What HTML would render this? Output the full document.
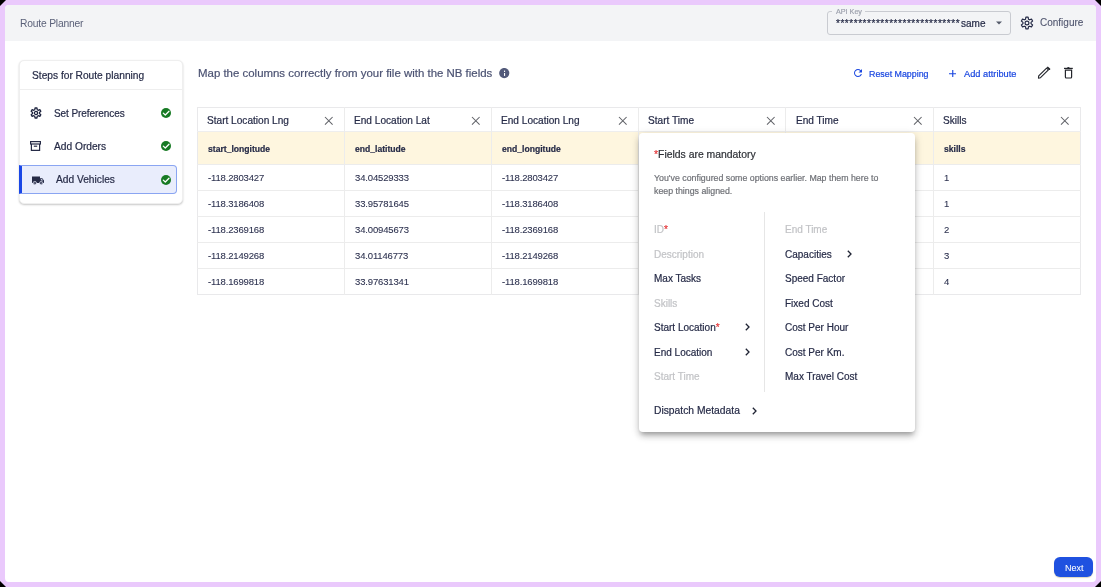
<!DOCTYPE html>
<html><head><meta charset="utf-8"><style>
html,body{margin:0;padding:0;width:1101px;height:587px;overflow:hidden;background:#000}
body{position:relative;font-family:"Liberation Sans", sans-serif}
.t{position:absolute;line-height:1;white-space:nowrap;will-change:transform;-webkit-text-stroke:0.2px currentColor}
</style></head><body>
<div style="position:absolute;left:0;top:0;width:1101px;height:587px;background:#eac9fc;clip-path:polygon(6px 0,calc(100% - 6px) 0,100% 6px,100% calc(100% - 6px),calc(100% - 6px) 100%,6px 100%,0 calc(100% - 6px),0 6px)"></div>
<div style="position:absolute;left:5px;top:5px;width:1091px;height:577px;background:#fff;border-radius:4px;overflow:hidden"></div>
<div style="position:absolute;left:5px;top:5px;width:1091px;height:36px;background:#f3f4f6;border-radius:4px 4px 0 0"></div>
<div class="t" style="left:20.00px;top:18.68px;font-size:10.3px;color:#5b6179;font-weight:400;-webkit-text-stroke:0;letter-spacing:-0.2px">Route Planner</div>
<div style="position:absolute;left:827px;top:11px;width:184px;height:24px;box-sizing:border-box;border:1px solid #c9cbd1;border-radius:3px"></div>
<div style="position:absolute;left:832px;top:8px;width:33px;height:6px;background:#f3f4f6"></div>
<div class="t" style="left:836.00px;top:7.51px;font-size:7.2px;color:#9ea2ae;font-weight:400;">API Key</div>
<div class="t" style="left:836.00px;top:18.84px;font-size:10px;color:#262b47;font-weight:400;letter-spacing:0.54px">****************************</div>
<div class="t" style="left:960.60px;top:18.84px;font-size:10px;color:#262b47;font-weight:400;">same</div>
<svg style="position:absolute;left:996px;top:21px" width="6" height="4" viewBox="0 0 6 4"><path d="M0 0.5h6l-3 3z" fill="#555a6a"/></svg>
<svg style="position:absolute;left:1020.2px;top:15.8px" width="14" height="14" viewBox="0 0 24 24"><path d="M14.51 5.46L13.95 1.99L10.05 1.99L9.49 5.46L7.59 6.56L4.30 5.31L2.36 8.68L5.09 10.90L5.09 13.10L2.36 15.32L4.30 18.69L7.59 17.44L9.49 18.54L10.05 22.01L13.95 22.01L14.51 18.54L16.41 17.44L19.70 18.69L21.64 15.32L18.91 13.10L18.91 10.90L21.64 8.68L19.70 5.31L16.41 6.56Z" fill="none" stroke="#262b47" stroke-width="2.0" stroke-linejoin="round"/><circle cx="12" cy="12" r="3.3" fill="none" stroke="#262b47" stroke-width="2.0"/></svg>
<div class="t" style="left:1039.70px;top:18.23px;font-size:10px;color:#4f556e;font-weight:400;-webkit-text-stroke:0.1px currentColor">Configure</div>
<div style="position:absolute;left:19px;top:60px;width:164px;height:144px;box-sizing:border-box;border:1px solid #efefef;border-radius:5px;box-shadow:0 1px 2px rgba(0,0,0,0.22);background:#fff"></div>
<div class="t" style="left:31.80px;top:70.77px;font-size:10.2px;color:#262b47;font-weight:400;">Steps for Route planning</div>
<div style="position:absolute;left:20px;top:89px;width:162px;height:1px;background:#eeeeee"></div>
<svg style="position:absolute;left:29.700000000000003px;top:106.8px" width="12" height="12" viewBox="0 0 24 24"><path d="M14.51 5.46L13.95 1.99L10.05 1.99L9.49 5.46L7.59 6.56L4.30 5.31L2.36 8.68L5.09 10.90L5.09 13.10L2.36 15.32L4.30 18.69L7.59 17.44L9.49 18.54L10.05 22.01L13.95 22.01L14.51 18.54L16.41 17.44L19.70 18.69L21.64 15.32L18.91 13.10L18.91 10.90L21.64 8.68L19.70 5.31L16.41 6.56Z" fill="none" stroke="#1f2540" stroke-width="2.6" stroke-linejoin="round"/><circle cx="12" cy="12" r="3.2" fill="none" stroke="#1f2540" stroke-width="2.6"/></svg>
<div class="t" style="left:54.10px;top:108.94px;font-size:10px;color:#262b47;font-weight:400;letter-spacing:-0.07px">Set Preferences</div>
<svg style="position:absolute;left:161px;top:107.9px" width="10" height="10" viewBox="0 0 10 10"><circle cx="5" cy="5" r="5" fill="#177a24"/><path d="M2.3 5.1l2 1.9 3.7-3.8" fill="none" stroke="#fff" stroke-width="1.25" stroke-linecap="round" stroke-linejoin="round"/></svg>
<svg style="position:absolute;left:30px;top:141px" width="11" height="10" viewBox="0 0 11 10"><rect x="0.6" y="0.6" width="9.8" height="2.4" fill="none" stroke="#262b47" stroke-width="1.2"/><path d="M1.4 3v6.4h8.2V3" fill="none" stroke="#262b47" stroke-width="1.2"/><path d="M3.8 5.2h3.4" stroke="#262b47" stroke-width="1.2"/></svg>
<div class="t" style="left:54.30px;top:141.97px;font-size:10.2px;color:#262b47;font-weight:400;">Add Orders</div>
<svg style="position:absolute;left:161px;top:141px" width="10" height="10" viewBox="0 0 10 10"><circle cx="5" cy="5" r="5" fill="#177a24"/><path d="M2.3 5.1l2 1.9 3.7-3.8" fill="none" stroke="#fff" stroke-width="1.25" stroke-linecap="round" stroke-linejoin="round"/></svg>
<div style="position:absolute;left:19px;top:165px;width:158px;height:29px;box-sizing:border-box;background:#e9edfc;border:1px solid #8aa5f2;border-left:3px solid #1a47e6;border-radius:0 4px 4px 0"></div>
<svg style="position:absolute;left:32px;top:175.6px" width="12" height="9" viewBox="0 0 12 9"><path d="M0 0.4h8v1.8h2.3l1.7 2.4v2.4h-12z" fill="#262b47"/><path d="M8.8 3h1.2l1.1 1.6h-2.3z" fill="#c8cde0"/><circle cx="2.8" cy="7.1" r="1.7" fill="#262b47" stroke="#e9edfc" stroke-width="0.7"/><circle cx="9.2" cy="7.1" r="1.7" fill="#262b47" stroke="#e9edfc" stroke-width="0.7"/><circle cx="2.8" cy="7.1" r="0.5" fill="#e9edfc"/><circle cx="9.2" cy="7.1" r="0.5" fill="#e9edfc"/></svg>
<div class="t" style="left:56.20px;top:175.07px;font-size:10.2px;color:#262b47;font-weight:400;">Add Vehicles</div>
<svg style="position:absolute;left:161.1px;top:174.6px" width="10" height="10" viewBox="0 0 10 10"><circle cx="5" cy="5" r="5" fill="#177a24"/><path d="M2.3 5.1l2 1.9 3.7-3.8" fill="none" stroke="#fff" stroke-width="1.25" stroke-linecap="round" stroke-linejoin="round"/></svg>
<div class="t" style="left:197.90px;top:67.91px;font-size:11.45px;color:#4b5272;font-weight:400;">Map the columns correctly from your file with the NB fields</div>
<svg style="position:absolute;left:499px;top:68px" width="11" height="11" viewBox="0 0 11 11"><circle cx="5.25" cy="5.05" r="5.1" fill="#525a7a"/><rect x="5" y="2.6" width="1.1" height="1.4" fill="#fff"/><rect x="5" y="5.0" width="1.1" height="2.9" fill="#fff"/></svg>
<svg style="position:absolute;left:851.8px;top:67px" width="12" height="12" viewBox="0 0 24 24"><path fill="#1a47e0" d="M17.65 6.35C16.2 4.9 14.21 4 12 4c-4.42 0-7.99 3.58-7.99 8s3.57 8 7.99 8c3.73 0 6.84-2.55 7.73-6h-2.08c-.82 2.330-3.04 4-5.65 4-3.31 0-6-2.69-6-6s2.69-6 6-6c1.66 0 3.140.69 4.22 1.78L13 11h7V4l-2.35 2.35z"/></svg>
<div class="t" style="left:869.30px;top:69.81px;font-size:8.85px;color:#1a47e0;font-weight:400;">Reset Mapping</div>
<svg style="position:absolute;left:948.6px;top:69.8px" width="7.5" height="7.5" viewBox="0 0 8 8"><path d="M4 0v8M0 4h8" stroke="#1a47e0" stroke-width="1.2"/></svg>
<div class="t" style="left:963.70px;top:69.57px;font-size:9.25px;color:#1a47e0;font-weight:400;">Add attribute</div>
<svg style="position:absolute;left:1034.5px;top:62.4px" width="20" height="20" viewBox="0 0 20 20"><path d="M3.7 13.9L11.6 6.1 13.4 7.9 5.5 15.7 3.5 16.1z" fill="none" stroke="#23252b" stroke-width="1.15" stroke-linejoin="round"/><path d="M12.75 5.5L14.45 7.2" stroke="#23252b" stroke-width="1.7" stroke-linecap="round"/></svg>
<svg style="position:absolute;left:1060px;top:63px" width="16" height="18" viewBox="0 0 16 18"><path d="M4 5.4h8.8" stroke="#23252b" stroke-width="1.2"/><path d="M7.4 4.5h2" stroke="#23252b" stroke-width="0.9"/><path d="M5.4 7.2h6.2v6.9q0 .9-.9.9H6.3q-.9 0-.9-.9z" fill="none" stroke="#23252b" stroke-width="1.2"/></svg>
<div style="position:absolute;left:197px;top:107px;width:884px;height:188px;box-sizing:border-box;border:1px solid #e9e9eb;background:#fff"></div>
<div style="position:absolute;left:198px;top:132px;width:882px;height:32px;background:#fef6df"></div>
<div style="position:absolute;left:197px;top:131px;width:884px;height:1px;background:#eeeeee"></div>
<div style="position:absolute;left:197px;top:164px;width:884px;height:1px;background:#ececec"></div>
<div style="position:absolute;left:197px;top:190px;width:884px;height:1px;background:#ececec"></div>
<div style="position:absolute;left:197px;top:216px;width:884px;height:1px;background:#ececec"></div>
<div style="position:absolute;left:197px;top:242px;width:884px;height:1px;background:#ececec"></div>
<div style="position:absolute;left:197px;top:268px;width:884px;height:1px;background:#ececec"></div>
<div style="position:absolute;left:344px;top:107px;width:1px;height:188px;background:#ececec"></div>
<div style="position:absolute;left:491px;top:107px;width:1px;height:188px;background:#ececec"></div>
<div style="position:absolute;left:638px;top:107px;width:1px;height:188px;background:#ececec"></div>
<div style="position:absolute;left:785px;top:107px;width:1px;height:188px;background:#ececec"></div>
<div style="position:absolute;left:933px;top:107px;width:1px;height:188px;background:#ececec"></div>
<div class="t" style="left:206.80px;top:116.05px;font-size:10.1px;color:#262b47;font-weight:400;">Start Location Lng</div>
<svg style="position:absolute;left:324px;top:116px" width="9" height="9" viewBox="0 0 9 9"><path d="M1 1l7.6 7.6M8.6 1l-7.6 7.6" stroke="#606268" stroke-width="1.05"/></svg>
<div class="t" style="left:208.00px;top:145.12px;font-size:8.6px;color:#262b47;font-weight:700;">start_longitude</div>
<div class="t" style="left:208.30px;top:173.36px;font-size:9.5px;color:#2e3350;font-weight:400;letter-spacing:-0.15px;-webkit-text-stroke:0.1px currentColor">-118.2803427</div>
<div class="t" style="left:208.30px;top:199.36px;font-size:9.5px;color:#2e3350;font-weight:400;letter-spacing:-0.15px;-webkit-text-stroke:0.1px currentColor">-118.3186408</div>
<div class="t" style="left:208.30px;top:225.36px;font-size:9.5px;color:#2e3350;font-weight:400;letter-spacing:-0.15px;-webkit-text-stroke:0.1px currentColor">-118.2369168</div>
<div class="t" style="left:208.30px;top:251.36px;font-size:9.5px;color:#2e3350;font-weight:400;letter-spacing:-0.15px;-webkit-text-stroke:0.1px currentColor">-118.2149268</div>
<div class="t" style="left:208.30px;top:277.36px;font-size:9.5px;color:#2e3350;font-weight:400;letter-spacing:-0.15px;-webkit-text-stroke:0.1px currentColor">-118.1699818</div>
<div class="t" style="left:353.80px;top:116.05px;font-size:10.1px;color:#262b47;font-weight:400;">End Location Lat</div>
<svg style="position:absolute;left:471px;top:116px" width="9" height="9" viewBox="0 0 9 9"><path d="M1 1l7.6 7.6M8.6 1l-7.6 7.6" stroke="#606268" stroke-width="1.05"/></svg>
<div class="t" style="left:355.00px;top:145.12px;font-size:8.6px;color:#262b47;font-weight:700;">end_latitude</div>
<div class="t" style="left:355.30px;top:173.36px;font-size:9.5px;color:#2e3350;font-weight:400;letter-spacing:-0.15px;-webkit-text-stroke:0.1px currentColor">34.04529333</div>
<div class="t" style="left:355.30px;top:199.36px;font-size:9.5px;color:#2e3350;font-weight:400;letter-spacing:-0.15px;-webkit-text-stroke:0.1px currentColor">33.95781645</div>
<div class="t" style="left:355.30px;top:225.36px;font-size:9.5px;color:#2e3350;font-weight:400;letter-spacing:-0.15px;-webkit-text-stroke:0.1px currentColor">34.00945673</div>
<div class="t" style="left:355.30px;top:251.36px;font-size:9.5px;color:#2e3350;font-weight:400;letter-spacing:-0.15px;-webkit-text-stroke:0.1px currentColor">34.01146773</div>
<div class="t" style="left:355.30px;top:277.36px;font-size:9.5px;color:#2e3350;font-weight:400;letter-spacing:-0.15px;-webkit-text-stroke:0.1px currentColor">33.97631341</div>
<div class="t" style="left:500.80px;top:116.05px;font-size:10.1px;color:#262b47;font-weight:400;">End Location Lng</div>
<svg style="position:absolute;left:618px;top:116px" width="9" height="9" viewBox="0 0 9 9"><path d="M1 1l7.6 7.6M8.6 1l-7.6 7.6" stroke="#606268" stroke-width="1.05"/></svg>
<div class="t" style="left:502.00px;top:145.12px;font-size:8.6px;color:#262b47;font-weight:700;">end_longitude</div>
<div class="t" style="left:502.30px;top:173.36px;font-size:9.5px;color:#2e3350;font-weight:400;letter-spacing:-0.15px;-webkit-text-stroke:0.1px currentColor">-118.2803427</div>
<div class="t" style="left:502.30px;top:199.36px;font-size:9.5px;color:#2e3350;font-weight:400;letter-spacing:-0.15px;-webkit-text-stroke:0.1px currentColor">-118.3186408</div>
<div class="t" style="left:502.30px;top:225.36px;font-size:9.5px;color:#2e3350;font-weight:400;letter-spacing:-0.15px;-webkit-text-stroke:0.1px currentColor">-118.2369168</div>
<div class="t" style="left:502.30px;top:251.36px;font-size:9.5px;color:#2e3350;font-weight:400;letter-spacing:-0.15px;-webkit-text-stroke:0.1px currentColor">-118.2149268</div>
<div class="t" style="left:502.30px;top:277.36px;font-size:9.5px;color:#2e3350;font-weight:400;letter-spacing:-0.15px;-webkit-text-stroke:0.1px currentColor">-118.1699818</div>
<div class="t" style="left:648.40px;top:116.05px;font-size:10.1px;color:#262b47;font-weight:400;">Start Time</div>
<svg style="position:absolute;left:765.6px;top:116px" width="9" height="9" viewBox="0 0 9 9"><path d="M1 1l7.6 7.6M8.6 1l-7.6 7.6" stroke="#606268" stroke-width="1.05"/></svg>
<div class="t" style="left:795.60px;top:116.05px;font-size:10.1px;color:#262b47;font-weight:400;">End Time</div>
<svg style="position:absolute;left:912.8px;top:116px" width="9" height="9" viewBox="0 0 9 9"><path d="M1 1l7.6 7.6M8.6 1l-7.6 7.6" stroke="#606268" stroke-width="1.05"/></svg>
<div class="t" style="left:942.80px;top:116.05px;font-size:10.1px;color:#262b47;font-weight:400;">Skills</div>
<svg style="position:absolute;left:1060px;top:116px" width="9" height="9" viewBox="0 0 9 9"><path d="M1 1l7.6 7.6M8.6 1l-7.6 7.6" stroke="#606268" stroke-width="1.05"/></svg>
<div class="t" style="left:944.00px;top:145.12px;font-size:8.6px;color:#262b47;font-weight:700;">skills</div>
<div class="t" style="left:944.30px;top:173.36px;font-size:9.5px;color:#2e3350;font-weight:400;letter-spacing:-0.15px;-webkit-text-stroke:0.1px currentColor">1</div>
<div class="t" style="left:944.30px;top:199.36px;font-size:9.5px;color:#2e3350;font-weight:400;letter-spacing:-0.15px;-webkit-text-stroke:0.1px currentColor">1</div>
<div class="t" style="left:944.30px;top:225.36px;font-size:9.5px;color:#2e3350;font-weight:400;letter-spacing:-0.15px;-webkit-text-stroke:0.1px currentColor">2</div>
<div class="t" style="left:944.30px;top:251.36px;font-size:9.5px;color:#2e3350;font-weight:400;letter-spacing:-0.15px;-webkit-text-stroke:0.1px currentColor">3</div>
<div class="t" style="left:944.30px;top:277.36px;font-size:9.5px;color:#2e3350;font-weight:400;letter-spacing:-0.15px;-webkit-text-stroke:0.1px currentColor">4</div>
<div style="position:absolute;left:639px;top:133px;width:276px;height:299px;background:#fff;border-radius:4px;box-shadow:0 4px 4px -2px rgba(0,0,0,0.22),0 5px 7px 0 rgba(0,0,0,0.14),0 2px 9px 1px rgba(0,0,0,0.12)"></div>
<div class="t" style="left:653.80px;top:149.90px;font-size:10.4px;color:#2d3036;font-weight:400;"><span style="color:#e5383b">*</span>Fields are mandatory</div>
<div class="t" style="left:654.40px;top:174.05px;font-size:8.8px;color:#6e7076;font-weight:400;">You&#39;ve configured some options earlier. Map them here to</div>
<div class="t" style="left:654.40px;top:187.05px;font-size:8.8px;color:#6e7076;font-weight:400;">keep things aligned.</div>
<div style="position:absolute;left:764px;top:212px;width:1px;height:180px;background:#e6e6e6"></div>
<div class="t" style="left:654.20px;top:225.23px;font-size:10px;color:#c2c3c6;font-weight:400;">ID<span style="color:#e5383b">*</span></div>
<div class="t" style="left:654.20px;top:249.73px;font-size:10px;color:#c2c3c6;font-weight:400;">Description</div>
<div class="t" style="left:654.20px;top:274.24px;font-size:10px;color:#262b47;font-weight:400;">Max Tasks</div>
<div class="t" style="left:654.20px;top:298.74px;font-size:10px;color:#c2c3c6;font-weight:400;">Skills</div>
<div class="t" style="left:654.20px;top:323.24px;font-size:10px;color:#262b47;font-weight:400;">Start Location<span style="color:#e5383b">*</span></div>
<svg style="position:absolute;left:744.6px;top:323.2px" width="5" height="8" viewBox="0 0 5 8"><path d="M0.8 0.8l3.2 3.2-3.2 3.2" fill="none" stroke="#1f2333" stroke-width="1.3"/></svg>
<div class="t" style="left:654.20px;top:347.74px;font-size:10px;color:#262b47;font-weight:400;">End Location</div>
<svg style="position:absolute;left:744.6px;top:347.7px" width="5" height="8" viewBox="0 0 5 8"><path d="M0.8 0.8l3.2 3.2-3.2 3.2" fill="none" stroke="#1f2333" stroke-width="1.3"/></svg>
<div class="t" style="left:654.20px;top:372.24px;font-size:10px;color:#c2c3c6;font-weight:400;">Start Time</div>
<div class="t" style="left:784.60px;top:225.13px;font-size:10px;color:#c2c3c6;font-weight:400;">End Time</div>
<div class="t" style="left:784.60px;top:249.64px;font-size:10px;color:#262b47;font-weight:400;">Capacities</div>
<svg style="position:absolute;left:846.9px;top:249.60000000000002px" width="5" height="8" viewBox="0 0 5 8"><path d="M0.8 0.8l3.2 3.2-3.2 3.2" fill="none" stroke="#1f2333" stroke-width="1.3"/></svg>
<div class="t" style="left:784.60px;top:274.14px;font-size:10px;color:#262b47;font-weight:400;">Speed Factor</div>
<div class="t" style="left:784.60px;top:298.64px;font-size:10px;color:#262b47;font-weight:400;">Fixed Cost</div>
<div class="t" style="left:784.60px;top:323.14px;font-size:10px;color:#262b47;font-weight:400;">Cost Per Hour</div>
<div class="t" style="left:784.60px;top:347.64px;font-size:10px;color:#262b47;font-weight:400;">Cost Per Km.</div>
<div class="t" style="left:784.60px;top:372.14px;font-size:10px;color:#262b47;font-weight:400;">Max Travel Cost</div>
<div class="t" style="left:654.30px;top:405.68px;font-size:10.3px;color:#262b47;font-weight:400;">Dispatch Metadata</div>
<svg style="position:absolute;left:751.9px;top:406.8px" width="5" height="8" viewBox="0 0 5 8"><path d="M0.8 0.8l3.2 3.2-3.2 3.2" fill="none" stroke="#1f2333" stroke-width="1.3"/></svg>
<div style="position:absolute;left:1054px;top:557px;width:39px;height:20px;background:#1f51e0;border-radius:6px;box-shadow:0 1px 1px rgba(120,100,0,0.25)"></div>
<div class="t" style="left:1064.70px;top:563.88px;font-size:9px;color:#ffffff;font-weight:400;-webkit-text-stroke:0.05px currentColor">Next</div>
</body></html>
